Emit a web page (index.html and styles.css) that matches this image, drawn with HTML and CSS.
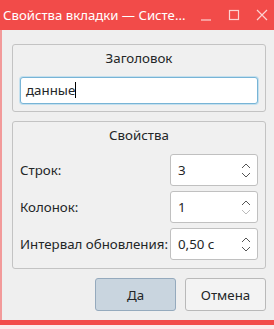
FILE: index.html
```html
<!DOCTYPE html>
<html>
<head>
<title>Свойства вкладки</title>
<link rel="stylesheet" href="styles.css">
</head>
<body>
<div class="window">
  <div class="titlebar">
    <span class="title-text">Свойства вкладки — Систе...</span>
    <span class="title-buttons">
      <svg width="12" height="12" viewBox="0 0 12 12"><path d="M1 11H11" stroke="#fff" stroke-opacity="0.75" stroke-width="1.2"/></svg>
      <svg width="12" height="12" viewBox="0 0 12 12"><rect x="1.5" y="1.5" width="9" height="9" fill="none" stroke="#fff" stroke-opacity="0.75" stroke-width="1.2"/></svg>
      <svg width="12" height="12" viewBox="0 0 12 12"><path d="M1 1L11 11M11 1L1 11" stroke="#fff" stroke-opacity="0.75" stroke-width="1.2"/></svg>
    </span>
  </div>
  <div class="content">
    <div class="group">
      <div class="group-title">Заголовок</div>
      <div class="line-edit">данные<span class="caret"></span></div>
    </div>

    <div class="group">
      <div class="group-title">Свойства</div>
      <div class="form-row">
        <span class="form-label">Строк:</span>
        <div class="spin">
          <span class="spin-value">3</span>
          <span class="spin-arrows">
            <svg width="10" height="6" viewBox="0 0 10 6"><path d="M1 5L5 1L9 5" fill="none" stroke="#555" stroke-width="1"/></svg>
            <svg width="10" height="6" viewBox="0 0 10 6"><path d="M1 1L5 5L9 1" fill="none" stroke="#555" stroke-width="1"/></svg>
          </span>
        </div>
      </div>
      <div class="form-row">
        <span class="form-label">Колонок:</span>
        <div class="spin">
          <span class="spin-value">1</span>
          <span class="spin-arrows">
            <svg width="10" height="6" viewBox="0 0 10 6"><path d="M1 5L5 1L9 5" fill="none" stroke="#555" stroke-width="1"/></svg>
            <svg width="10" height="6" viewBox="0 0 10 6"><path d="M1 1L5 5L9 1" fill="none" stroke="#bbb" stroke-width="1"/></svg>
          </span>
        </div>
      </div>
      <div class="form-row">
        <span class="form-label">Интервал обновления:</span>
        <div class="spin">
          <span class="spin-value">0,50 с</span>
          <span class="spin-arrows">
            <svg width="10" height="6" viewBox="0 0 10 6"><path d="M1 5L5 1L9 5" fill="none" stroke="#555" stroke-width="1"/></svg>
            <svg width="10" height="6" viewBox="0 0 10 6"><path d="M1 1L5 5L9 1" fill="none" stroke="#555" stroke-width="1"/></svg>
          </span>
        </div>
      </div>
    </div>

    <div class="buttons">
      <button class="btn btn-default">Да</button>
      <button class="btn">Отмена</button>
    </div>
  </div>
  <div class="bottom-edge"></div>
</div>
</body>
</html>
```

FILE: styles.css
```css
body {
  margin: 0;
  font-family: "Noto Sans", sans-serif;
  font-size: 13.3px;
  color: #232627;
  background: #fbe9e9;
}

.window {
  width: 274px;
  height: 329px;
  display: flex;
  flex-direction: column;
}

.titlebar {
  height: 30px;
  background: #f24b49;
  color: #fff;
  display: flex;
  align-items: center;
  justify-content: space-between;
  padding: 0 6px 0 3px;
}

.title-text {
  font-size: 13.2px;
  white-space: nowrap;
}

.title-buttons {
  display: flex;
  gap: 16px;
  align-items: center;
  flex-shrink: 0;
}

.content {
  flex: 1;
  background: #efefef;
  border-left: 2px solid #f29a9a;
  padding: 14px 8px 8px 10px;
  display: flex;
  flex-direction: column;
  gap: 9px;
}

.group {
  border: 1px solid #c3c3c3;
  border-radius: 3px;
  background: #f0f0f0;
  padding: 0 7px 7px 7px;
}

.group-title {
  text-align: center;
  height: 26px;
  line-height: 26px;
  margin-bottom: 6px;
}

.line-edit {
  height: 25px;
  border: 1px solid #78b4d6;
  border-radius: 3px;
  background: #fff;
  padding-left: 5px;
  line-height: 25px;
  box-shadow: 0 0 0 1px #c4e0ee;
}

.caret {
  display: inline-block;
  width: 1px;
  height: 16px;
  background: #000;
  vertical-align: -3px;
}

.form-row {
  display: flex;
  align-items: center;
  justify-content: space-between;
  margin-bottom: 5px;
}

.form-row:last-child {
  margin-bottom: 1px;
}

.spin {
  width: 88px;
  height: 32px;
  box-sizing: border-box;
  border: 1px solid #c0c0c0;
  border-radius: 3px;
  background: #fff;
  display: flex;
  align-items: center;
  justify-content: space-between;
  padding: 0 6px 0 7px;
}

.spin-arrows {
  display: flex;
  flex-direction: column;
  gap: 3px;
}

.spin-arrows svg {
  display: block;
}

.buttons {
  display: flex;
  justify-content: flex-end;
  gap: 9px;
  margin-top: 0;
}

.btn {
  width: 81px;
  height: 33px;
  font-family: "Noto Sans", sans-serif;
  font-size: 13.3px;
  color: #232627;
  border: 1px solid #b9b9b9;
  border-radius: 3px;
  background: #f3f3f3;
}

.btn-default {
  background: #c9d5df;
  border-color: #95aabd;
}

.bottom-edge {
  height: 5px;
  background: #f24b49;
  margin-bottom: 4px;
}
```
